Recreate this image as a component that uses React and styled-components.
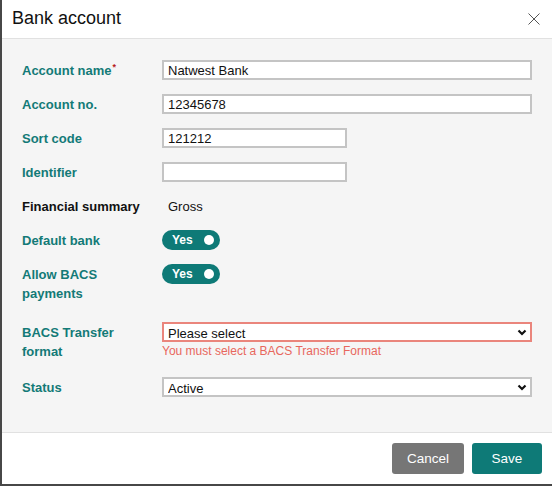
import React from "react";
import styled, { createGlobalStyle } from "styled-components";

const teal = "#0e7a77";

export default function App() {
  return (
    <>
      <GlobalStyle />
      <Dialog>
        <Header>
          <Title>Bank account</Title>
          <CloseButton aria-label="Close">
            <svg width="12" height="12" viewBox="0 0 12 12">
              <path d="M0.5 0.5L11.5 11.5M11.5 0.5L0.5 11.5" stroke="#555" strokeWidth="1" fill="none" />
            </svg>
          </CloseButton>
        </Header>

        <Body>
          <Row>
            <Label>
              Account name<Required>*</Required>
            </Label>
            <TextInput defaultValue="Natwest Bank" />
          </Row>
          <Row>
            <Label>Account no.</Label>
            <TextInput defaultValue="12345678" />
          </Row>
          <Row>
            <Label>Sort code</Label>
            <TextInput $short defaultValue="121212" />
          </Row>
          <Row>
            <Label>Identifier</Label>
            <TextInput $short defaultValue="" />
          </Row>
          <Row>
            <Label $plain>Financial summary</Label>
            <Value>Gross</Value>
          </Row>
          <Row>
            <Label>Default bank</Label>
            <Toggle>
              Yes
              <Knob />
            </Toggle>
          </Row>
          <Row>
            <Label>Allow BACS payments</Label>
            <Toggle>
              Yes
              <Knob />
            </Toggle>
          </Row>
          <Row $space={19}>
            <Label>BACS Transfer format</Label>
            <Field>
              <SelectBox $error>
                <Select defaultValue="">
                  <option value="">Please select</option>
                </Select>
                <Chevron />
              </SelectBox>
              <Error>You must select a BACS Transfer Format</Error>
            </Field>
          </Row>
          <Row $space={16}>
            <Label>Status</Label>
            <SelectBox>
              <Select defaultValue="active">
                <option value="active">Active</option>
              </Select>
              <Chevron />
            </SelectBox>
          </Row>
        </Body>

        <Footer>
          <Button $variant="cancel">Cancel</Button>
          <Button>Save</Button>
        </Footer>
      </Dialog>
    </>
  );
}

function Chevron() {
  return (
    <ChevronIcon width="10" height="7" viewBox="0 0 10 7">
      <path d="M1.5 1.5L5 5L8.5 1.5" stroke="#111" strokeWidth="2.2" fill="none" />
    </ChevronIcon>
  );
}

//styles
const GlobalStyle = createGlobalStyle`
  html, body {
    margin: 0;
    padding: 0;
    background: #fff;
  }
  * {
    box-sizing: border-box;
  }
  body {
    font-family: "Liberation Sans", Arial, Helvetica, sans-serif;
  }
`;
const Dialog = styled.div`
  width: 552px;
  height: 486px;
  display: flex;
  flex-direction: column;
  background: #fff;
  border-left: 2px solid #474747;
  border-bottom: 2px solid #474747;
`;
const Header = styled.div`
  height: 39px;
  flex-shrink: 0;
  display: flex;
  align-items: center;
  justify-content: space-between;
  padding: 0 12px 1px 10px;
  border-bottom: 1px solid #e1e1e1;
`;
const Title = styled.h1`
  margin: 0;
  font-size: 18px;
  font-weight: 400;
  color: #111;
`;
const CloseButton = styled.button`
  border: none;
  background: none;
  padding: 0;
  display: flex;
  cursor: pointer;
`;
const Body = styled.div`
  flex: 1;
  background: #f5f5f5;
  padding: 21px 20px 0 20px;
  display: flex;
  flex-direction: column;
`;
const Row = styled.div`
  display: grid;
  grid-template-columns: 140px 1fr;
  align-items: start;
  margin-top: ${({ $space }) => ($space ? $space : 14)}px;
  &:first-child {
    margin-top: 0;
  }
`;
const Label = styled.div`
  font-size: 13px;
  line-height: 19px;
  padding-top: 1px;
  font-weight: 700;
  color: ${({ $plain }) => ($plain ? "#111" : "#137a77")};
  padding-right: 18px;
`;
const Required = styled.sup`
  color: #b71c1c;
  font-size: 9px;
  line-height: 0;
  margin-left: 1px;
`;
const TextInput = styled.input`
  width: ${({ $short }) => ($short ? "185px" : "100%")};
  height: 20px;
  border: 2px solid #c4c4c4;
  background: #fff;
  padding: 0 4px;
  font-family: inherit;
  font-size: 13px;
  color: #111;
  outline: none;
`;
const Value = styled.div`
  font-size: 13px;
  line-height: 19px;
  padding-top: 1px;
  color: #111;
  padding-left: 6px;
`;
const Toggle = styled.div`
  width: 58px;
  height: 20px;
  border-radius: 10px;
  background: ${teal};
  color: #fff;
  font-size: 12px;
  font-weight: 700;
  display: flex;
  align-items: center;
  justify-content: space-between;
  padding: 0 6px 0 10px;
`;
const Knob = styled.span`
  width: 10px;
  height: 10px;
  border-radius: 50%;
  background: #fff;
`;
const Field = styled.div`
  display: flex;
  flex-direction: column;
`;
const SelectBox = styled.div`
  position: relative;
  height: 20px;
  border: 2px solid ${({ $error }) => ($error ? "#ea857c" : "#c4c4c4")};
  background: #fff;
`;
const Select = styled.select`
  appearance: none;
  width: 100%;
  height: 100%;
  border: none;
  background: transparent;
  padding: 0 20px 0 4px;
  font-family: inherit;
  font-size: 13px;
  color: #111;
  outline: none;
`;
const ChevronIcon = styled.svg`
  position: absolute;
  right: 3px;
  top: 5px;
  pointer-events: none;
`;
const Error = styled.div`
  font-size: 12px;
  line-height: 16px;
  margin-top: 1px;
  color: #e8675d;
`;
const Footer = styled.div`
  height: 52px;
  flex-shrink: 0;
  border-top: 1px solid #e1e1e1;
  display: flex;
  justify-content: flex-end;
  align-items: center;
  gap: 8px;
  padding: 0 10px 0 0;
`;
const Button = styled.button`
  height: 31px;
  min-width: 70px;
  padding: 0 15px;
  border: none;
  border-radius: 3px;
  font-family: inherit;
  font-size: 13.5px;
  color: #fff;
  background: ${({ $variant }) => ($variant === "cancel" ? "#767676" : teal)};
  cursor: pointer;
`;
